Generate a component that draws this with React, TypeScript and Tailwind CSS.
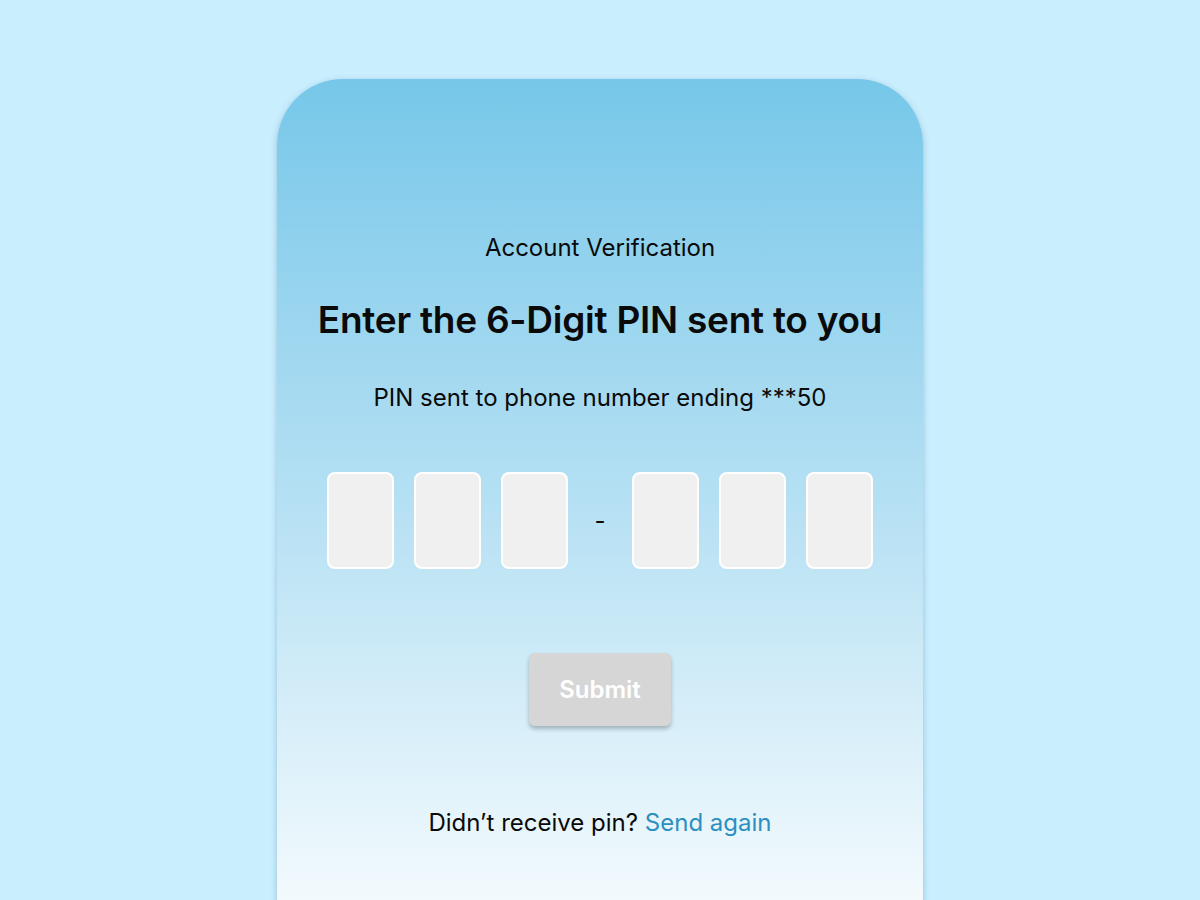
import React from "react";

const LEFT = [0, 1, 2];
const RIGHT = [3, 4, 5];

function PinBox() {
  return (
    <div className="w-[67px] h-[97px] rounded-[8px] border-2 border-white bg-[#f0f0f0]" />
  );
}

export default function App() {
  return (
    <div
      className="w-full h-[900px] overflow-hidden bg-[#c9eefe] pt-[79px]"
      style={{ fontFamily: "Inter, 'Noto Sans', sans-serif" }}
    >
      <div className="mx-auto w-[646px] h-[900px] rounded-t-[66px] bg-gradient-to-b from-[#76c7e9] via-[#b9e2f4] to-[#ffffff] shadow-[0_2px_6px_rgba(60,110,140,0.35)] flex flex-col items-center pt-[154px] text-[#0a0a0a]">
        <p className="text-[24px] leading-[30px]">Account Verification</p>

        <h1 className="mt-[34px] text-[37px] leading-[46px] font-semibold tracking-[-0.25px]">
          Enter the 6-Digit PIN sent to you
        </h1>

        <p className="mt-[40px] text-[24px] leading-[30px]">
          PIN sent to phone number ending ***50
        </p>

        <div className="mt-[59px] flex items-center">
          <div className="flex gap-[20px]">
            {LEFT.map((i) => (
              <PinBox key={i} />
            ))}
          </div>
          <span className="w-[64px] text-center text-[24px] leading-none">-</span>
          <div className="flex gap-[20px]">
            {RIGHT.map((i) => (
              <PinBox key={i} />
            ))}
          </div>
        </div>

        <button className="mt-[84px] w-[142px] h-[73px] rounded-[6px] bg-[#d6d6d6] text-white text-[24px] font-semibold shadow-[0_3px_4px_rgba(0,0,0,0.25)]">
          Submit
        </button>

        <p className="mt-[82px] text-[24px] leading-[30px]">
          Didn’t receive pin? <span className="text-[#2b8fc1]">Send again</span>
        </p>
      </div>
    </div>
  );
}
